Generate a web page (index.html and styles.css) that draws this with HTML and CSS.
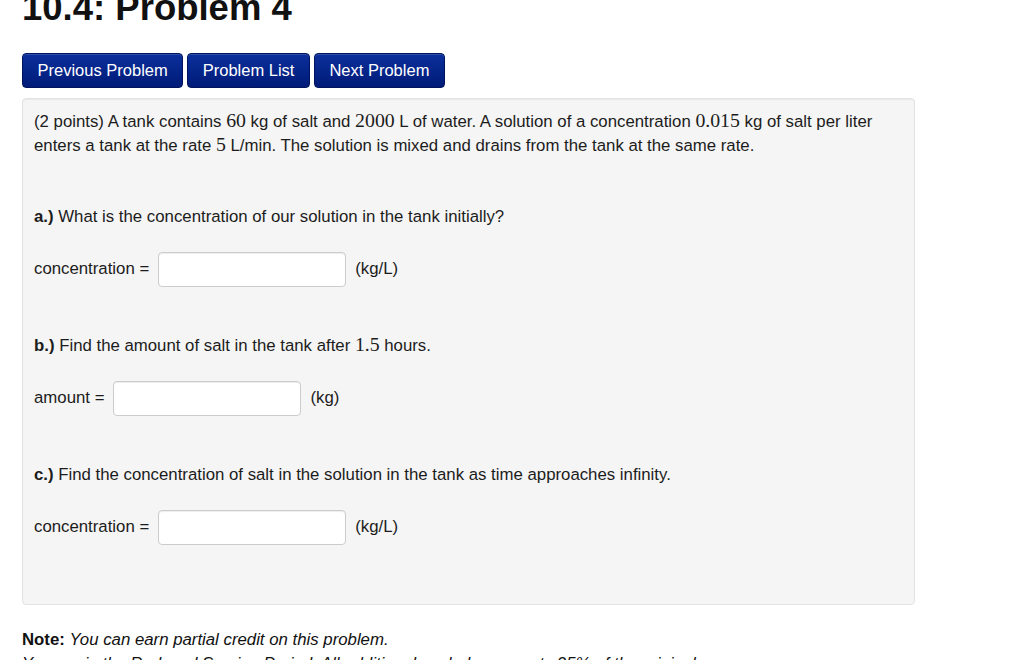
FILE: index.html
```html
<!DOCTYPE html>
<html>
<head>
<meta charset="utf-8">
<link rel="stylesheet" href="styles.css">
</head>
<body>
<h1 class="title">10.4: Problem 4</h1>
<div class="nav">
  <a class="btn">Previous Problem</a>
  <a class="btn">Problem List</a>
  <a class="btn">Next Problem</a>
</div>
<div class="problem">
  <p class="intro">(2 points) A tank contains <span class="m">60</span> kg of salt and <span class="m">2000</span> L of water. A solution of a concentration <span class="m">0.015</span> kg of salt per liter enters a tank at the rate <span class="m">5</span> L/min. The solution is mixed and drains from the tank at the same rate.</p>
  <p class="q"><b>a.)</b> What is the concentration of our solution in the tank initially?</p>
  <div class="ans"><span>concentration =</span><input class="inp" type="text"><span>(kg/L)</span></div>
  <p class="q"><b>b.)</b> Find the amount of salt in the tank after <span class="m">1.5</span> hours.</p>
  <div class="ans"><span>amount =</span><input class="inp" type="text"><span>(kg)</span></div>
  <p class="q"><b>c.)</b> Find the concentration of salt in the solution in the tank as time approaches infinity.</p>
  <div class="ans"><span>concentration =</span><input class="inp" type="text"><span>(kg/L)</span></div>
</div>
<div class="notes">
  <div><b>Note:</b> <i>You can earn partial credit on this problem.</i></div>
  <div><i>You are in the Reduced Scoring Period. All additional work done counts 25% of the original.</i></div>
</div>
</body>
</html>
```

FILE: styles.css
```css
html, body {
  margin: 0;
  padding: 0;
  background: #ffffff;
  overflow: hidden;
}
body {
  font-family: "Liberation Sans", Arial, Helvetica, sans-serif;
  font-size: 16.8px;
  line-height: 24px;
  color: #1c1c1c;
  padding: 0 22px;
}
.title {
  margin: -13px 0 0 0;
  font-size: 36.5px;
  line-height: 42px;
  font-weight: bold;
  color: #111;
}
.nav {
  display: flex;
  gap: 4px;
  margin-top: 24px;
}
.btn {
  display: block;
  height: 33px;
  line-height: 33px;
  padding: 0 14.5px;
  color: #fff;
  font-size: 16.5px;
  border: 1px solid #00145e;
  border-radius: 4px;
  background: linear-gradient(#0b2f9c, #001b78);
  box-shadow: inset 0 1px 0 rgba(255,255,255,0.15);
}
.problem {
  width: 869px;
  margin-top: 10px;
  background: #f5f5f5;
  border: 1px solid #e3e3e3;
  border-radius: 4px;
  padding: 11px 11px 59px 11px;
  box-shadow: inset 0 1px 1px rgba(0,0,0,0.05);
}
.problem p {
  margin: 0;
}
.m {
  font-family: "Liberation Serif", "Times New Roman", serif;
  font-size: 19.8px;
  line-height: 1;
}
.q {
  margin-top: 47px !important;
}
.ans {
  display: flex;
  align-items: center;
  margin-top: 23px;
}
.ans span {
  position: relative;
  top: -1px;
}
.ans span:first-child {
  margin-right: 9px;
}
.inp {
  width: 188px;
  height: 35px;
  box-sizing: border-box;
  border: 1px solid #cccccc;
  border-radius: 4px;
  background: #fff;
  margin: 0 9px 0 0;
  padding: 0;
  box-shadow: inset 0 1px 1px rgba(0,0,0,0.075);
}
.notes {
  margin-top: 23px;
  color: #111;
}
```
